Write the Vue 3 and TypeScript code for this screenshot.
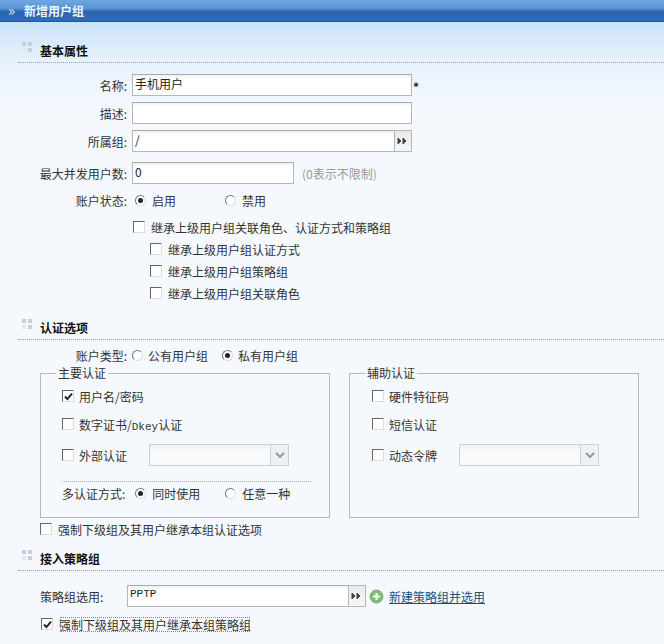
<script setup lang="ts">
const inheritOptions = ["继承上级用户组认证方式", "继承上级用户组策略组", "继承上级用户组关联角色"];
</script>

<template>
  <div class="page">
    <div class="titlebar">
      <span class="chevrons">»</span>
      <span class="title">新增用户组</span>
    </div>

    <div class="section-head">
      <span class="dots"><i></i><i></i><i class="off"></i><i></i></span>
      <h2>基本属性</h2>
    </div>

    <div class="row row-name">
      <label class="lbl">名称:</label>
      <input class="text wide" value="手机用户" readonly />
      <span class="req">*</span>
    </div>
    <div class="row row-desc">
      <label class="lbl">描述:</label>
      <input class="text wide" readonly />
    </div>
    <div class="row row-group">
      <label class="lbl">所属组:</label>
      <div class="picker wide">
        <input class="text fill" value="/" readonly />
        <span class="more">
          <svg width="12" height="8" viewBox="0 0 12 8"><path d="M1 1l3 3-3 3V1zM6 1l3 3-3 3V1z" fill="#444" stroke="#444" /></svg>
        </span>
      </div>
    </div>
    <div class="row row-max">
      <label class="lbl">最大并发用户数:</label>
      <input class="text short" value="0" readonly />
      <span class="hint">(0表示不限制)</span>
    </div>
    <div class="row row-status">
      <label class="lbl">账户状态:</label>
      <span class="radio on"></span><span class="rtxt">启用</span>
      <span class="radio second"></span><span class="rtxt">禁用</span>
    </div>

    <div class="check-row inherit-main">
      <span class="check"></span><span>继承上级用户组关联角色、认证方式和策略组</span>
    </div>
    <div class="check-row inherit-sub" v-for="opt in inheritOptions" :key="opt">
      <span class="check"></span><span>{{ opt }}</span>
    </div>

    <div class="section-head head-auth">
      <span class="dots"><i></i><i></i><i class="off"></i><i></i></span>
      <h2>认证选项</h2>
    </div>

    <div class="row row-type">
      <label class="lbl">账户类型:</label>
      <span class="radio"></span><span class="rtxt">公有用户组</span>
      <span class="radio type-second on"></span><span class="rtxt">私有用户组</span>
    </div>

    <div class="auth-boxes">
      <fieldset class="box">
        <legend>主要认证</legend>
        <div class="box-row first"><span class="check checked"><svg width="11" height="11" viewBox="0 0 11 11"><path d="M2 5.5l2.4 2.6L9 2.6" fill="none" stroke="#222" stroke-width="2" /></svg></span><span>用户名/密码</span></div>
        <div class="box-row"><span class="check"></span><span>数字证书/<span class="mono">Dkey</span>认证</span></div>
        <div class="box-row third"><span class="check"></span><span class="box-lbl">外部认证</span>
          <div class="combo"><span class="combo-btn"><svg width="10" height="6" viewBox="0 0 10 6"><path d="M1 1l4 4 4-4" fill="none" stroke="#8a9aa8" stroke-width="2" /></svg></span></div>
        </div>
        <div class="multi">
          <span class="multi-lbl">多认证方式:</span>
          <span class="radio on"></span><span class="rtxt">同时使用</span>
          <span class="radio multi-second"></span><span class="rtxt">任意一种</span>
        </div>
      </fieldset>
      <fieldset class="box box-right">
        <legend>辅助认证</legend>
        <div class="box-row first"><span class="check"></span><span>硬件特征码</span></div>
        <div class="box-row"><span class="check"></span><span>短信认证</span></div>
        <div class="box-row third"><span class="check"></span><span class="box-lbl">动态令牌</span>
          <div class="combo"><span class="combo-btn"><svg width="10" height="6" viewBox="0 0 10 6"><path d="M1 1l4 4 4-4" fill="none" stroke="#8a9aa8" stroke-width="2" /></svg></span></div>
        </div>
      </fieldset>
    </div>

    <div class="check-row force-auth">
      <span class="check"></span><span>强制下级组及其用户继承本组认证选项</span>
    </div>

    <div class="section-head head-policy">
      <span class="dots"><i></i><i></i><i class="off"></i><i></i></span>
      <h2>接入策略组</h2>
    </div>

    <div class="policy-row">
      <label class="policy-lbl">策略组选用:</label>
      <div class="picker policy-picker">
        <input class="text fill mono-input" value="PPTP" readonly />
        <span class="more">
          <svg width="12" height="8" viewBox="0 0 12 8"><path d="M1 1l3 3-3 3V1zM6 1l3 3-3 3V1z" fill="#444" stroke="#444" /></svg>
        </span>
      </div>
      <svg class="add-icon" width="15" height="15" viewBox="0 0 15 15">
        <circle cx="7.5" cy="7.5" r="6.5" fill="#7cc06e" stroke="#8aa88a" />
        <path d="M7.5 4v7M4 7.5h7" stroke="#fff" stroke-width="2" />
      </svg>
      <a class="link">新建策略组并选用</a>
    </div>

    <div class="check-row force-policy">
      <span class="check"><svg width="11" height="11" viewBox="0 0 11 11"><path d="M2 5.5l2.4 2.6L9 2.6" fill="none" stroke="#222" stroke-width="2" /></svg></span>
      <span class="focused">强制下级组及其用户继承本组策略组</span>
    </div>
  </div>
</template>

<style>
html, body {
  margin: 0;
  overflow: hidden;
}
</style>

<style scoped>
.page {
  width: 664px;
  height: 644px;
  overflow: hidden;
  font-family: "Noto Sans CJK SC", "Liberation Sans", sans-serif;
  font-size: 12px;
  color: #222;
  background: linear-gradient(#c9e3f8 22px, #e6f2fc 60px, #f5f9fe 110px, #f5f9fe);
}
.titlebar {
  height: 22px;
  box-sizing: border-box;
  display: flex;
  align-items: center;
  padding-left: 8px;
  background: linear-gradient(#6fa6e0, #5a94d6 40%, #2c66ae 55%, #2f6cb8);
  border-bottom: 1px solid #1f5aa0;
  color: #fff;
}
.chevrons {
  width: 16px;
  font-size: 15px;
  line-height: 18px;
  color: #cfe6fb;
  margin-top: -2px;
}
.title {
  font-weight: 700;
  font-size: 12px;
  color: #eef6ff;
}
.section-head {
  display: flex;
  align-items: center;
  height: 24px;
  margin: 16px 0 0 18px;
  border-bottom: 1px dotted #999;
}
.section-head h2 {
  margin: 0 0 0 -4px;
  font-size: 12px;
  font-weight: 700;
  color: #111;
}
.dots {
  width: 22px;
  display: grid;
  grid-template-columns: 4px 4px;
  gap: 2px;
  margin-left: 4px;
  margin-top: -6px;
  flex: none;
}
.dots i {
  width: 4px;
  height: 4px;
  background: #c6d0d8;
}
.dots i.off {
  background: #dfe6ec;
}
.row {
  display: flex;
  align-items: center;
  height: 22px;
}
.row-name { margin-top: 11px; }
.row-desc { margin-top: 6px; }
.row-group { margin-top: 6px; }
.row-max { margin-top: 10px; }
.row-status { margin-top: 3px; height: 26px; }
.lbl {
  width: 127px;
  text-align: right;
  color: #333;
  flex: none;
}
.row .lbl + * {
  margin-left: 5px;
}
.row-status .lbl + .radio {
  margin-left: 8px;
}
.text {
  height: 22px;
  box-sizing: border-box;
  padding: 0 2px 4px 2px;
  border: 1px solid #b4b8ba;
  border-top-color: #a8acae;
  background: linear-gradient(#f0f0f0, #fff 4px);
  font-family: "Noto Sans CJK SC", "Liberation Sans", sans-serif;
  font-size: 12px;
  color: #222;
  outline: none;
}
.wide { width: 280px; flex: none; }
.short { width: 162px; flex: none; }
.fill { flex: 1; width: 0; min-width: 0; }
.req {
  font-size: 12px;
  font-weight: 700;
  line-height: 22px;
  margin: 3px 0 0 1px;
}
.hint {
  margin-left: 8px;
  color: #999;
}
.picker {
  display: flex;
  height: 22px;
}
.more {
  width: 17px;
  box-sizing: border-box;
  border: 1px solid #b4b8ba;
  border-left: none;
  background: linear-gradient(#e9e9e9, #f6f6f6);
  display: flex;
  align-items: center;
  justify-content: center;
}
.radio {
  width: 11px;
  height: 11px;
  box-sizing: border-box;
  border-radius: 50%;
  border: 1px solid #777;
  border-right-color: #ddd;
  border-bottom-color: #ddd;
  background: #fff;
  display: inline-block;
  position: relative;
  flex: none;
}
.radio.on::after {
  content: "";
  position: absolute;
  left: 2px;
  top: 2px;
  width: 5px;
  height: 5px;
  border-radius: 50%;
  background: #222;
}
.rtxt { margin-left: 6px; color: #333; }
.row-status .second { margin-left: 49px; }
.check {
  width: 12px;
  height: 12px;
  box-sizing: border-box;
  border: 1px solid #666;
  border-right-color: #ddd;
  border-bottom-color: #ddd;
  background: #fff;
  display: inline-flex;
  align-items: center;
  justify-content: center;
  flex: none;
  margin-right: 6px;
}
.check svg { margin: -1px; flex: none; }
.check-row {
  display: flex;
  align-items: center;
  height: 22px;
  color: #333;
}
.inherit-main { margin-left: 133px; margin-top: 3px; }
.inherit-sub { margin-left: 150px; }
.section-head.head-auth { margin-top: 11px; }
.row-type { margin-top: 4px; }
.row-type .rtxt { margin-left: 5px; }
.row-type .type-second { margin-left: 14px; }
.auth-boxes {
  display: flex;
  gap: 19px;
  margin: 0 0 0 40px;
}
.box {
  width: 290px;
  height: 152px;
  box-sizing: border-box;
  margin: 0;
  padding: 0 0 0 21px;
  border: 1px solid #b4babd;
  min-width: 0;
}
.box-right { padding-left: 22px; }
.box legend {
  padding: 0 2px;
  margin-left: -6px;
  color: #333;
  font-size: 12px;
  line-height: 14px;
}
.box-right legend { margin-left: -7px; }
.box-row {
  display: flex;
  align-items: center;
  height: 28px;
  color: #333;
}
.box-row .check { margin-right: 5px; }
.box-row.first { margin-top: 2px; }
.box-row.third { margin-top: 3px; }
.box-lbl { width: 70px; flex: none; }
.combo {
  width: 140px;
  height: 22px;
  box-sizing: border-box;
  border: 1px solid #ccd2d6;
  background: linear-gradient(#eef1f3, #f8fafc 6px);
  display: flex;
  justify-content: flex-end;
}
.combo-btn {
  width: 17px;
  border-left: 1px solid #ccd2d6;
  background: #edf1f4;
  display: flex;
  align-items: center;
  justify-content: center;
}
.multi {
  display: flex;
  align-items: center;
  width: 249px;
  height: 22px;
  margin-top: 12px;
  border-top: 1px dotted #aaa;
  color: #333;
}
.multi-lbl { margin-right: 10px; }
.multi-second { margin-left: 25px; }
.force-auth { margin: 0 0 0 40px; }
.section-head.head-policy { margin-top: 6px; }
.policy-row {
  display: flex;
  align-items: center;
  height: 22px;
  margin: 14px 0 0 40px;
  color: #333;
}
.policy-lbl { width: 87px; flex: none; }
.policy-picker { width: 239px; flex: none; }
.mono-input { font-family: "Liberation Mono", monospace; font-size: 11px; }
.mono { font-family: "Liberation Mono", monospace; font-size: 11px; }
.add-icon { margin-left: 3px; flex: none; }
.link {
  margin-left: 5px;
  color: #1a4f7f;
  text-decoration: underline;
}
.force-policy { margin: 6px 0 0 41px; }
.focused { outline: 1px dotted #888; outline-offset: -2px; }
</style>
